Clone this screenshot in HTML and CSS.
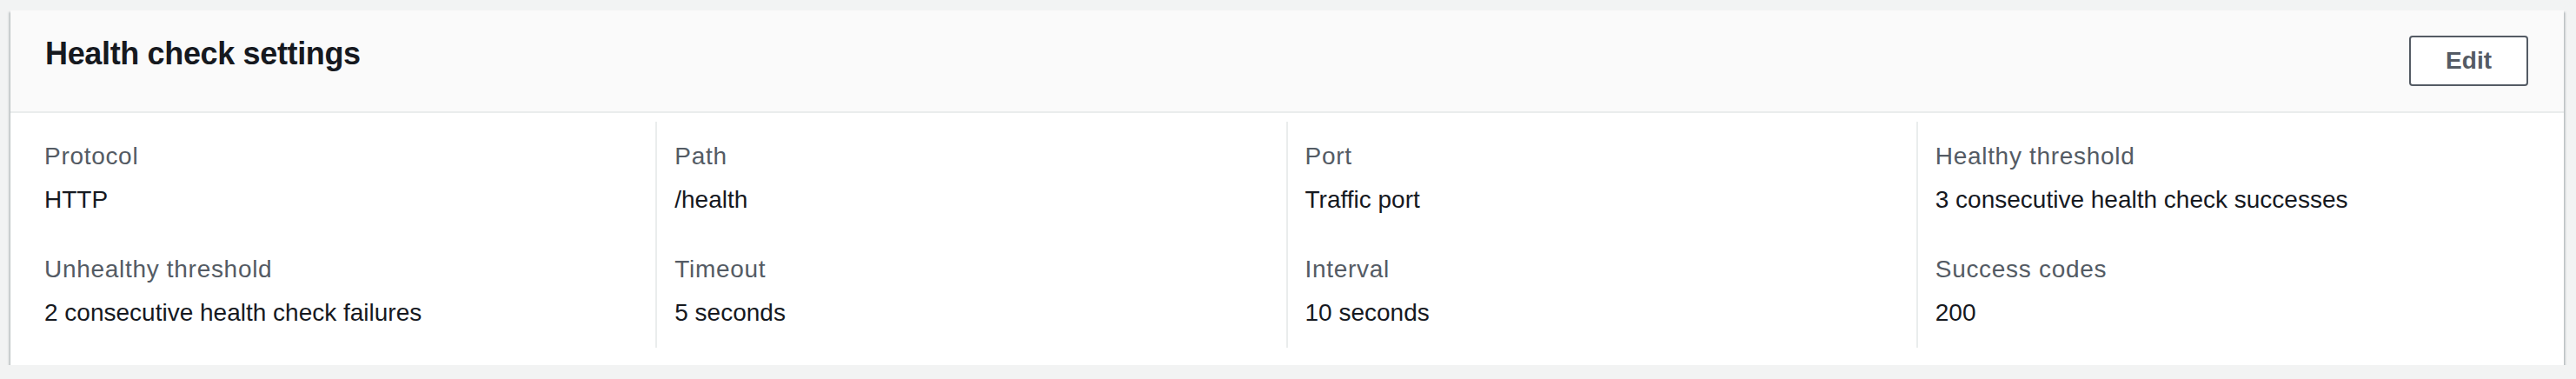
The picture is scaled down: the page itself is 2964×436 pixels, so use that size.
FILE: index.html
```html
<!DOCTYPE html>
<html lang="en">
<head>
<meta charset="utf-8">
<title>Health check settings</title>
<link rel="stylesheet" href="styles.css">
</head>
<body>
<section class="card">
  <header class="card-header">
    <h2 class="card-title">Health check settings</h2>
    <button class="btn" type="button">Edit</button>
  </header>
  <div class="card-body">
    <div class="grid">
      <div class="col">
        <div class="kv">
          <div class="kv-label">Protocol</div>
          <div class="kv-value">HTTP</div>
        </div>
        <div class="kv">
          <div class="kv-label">Unhealthy threshold</div>
          <div class="kv-value">2 consecutive health check failures</div>
        </div>
      </div>
      <div class="col">
        <div class="kv">
          <div class="kv-label">Path</div>
          <div class="kv-value">/health</div>
        </div>
        <div class="kv">
          <div class="kv-label">Timeout</div>
          <div class="kv-value">5 seconds</div>
        </div>
      </div>
      <div class="col">
        <div class="kv">
          <div class="kv-label">Port</div>
          <div class="kv-value">Traffic port</div>
        </div>
        <div class="kv">
          <div class="kv-label">Interval</div>
          <div class="kv-value">10 seconds</div>
        </div>
      </div>
      <div class="col">
        <div class="kv">
          <div class="kv-label">Healthy threshold</div>
          <div class="kv-value">3 consecutive health check successes</div>
        </div>
        <div class="kv">
          <div class="kv-label">Success codes</div>
          <div class="kv-value">200</div>
        </div>
      </div>
    </div>
  </div>
</section>
</body>
</html>
```
FILE: styles.css
```css
* {
  box-sizing: border-box;
}

html, body {
  margin: 0;
  background: #f2f3f3;
}

body {
  padding: 12px 14px 0 12px;
  font-family: "Liberation Sans", Arial, sans-serif;
  font-size: 28px;
  line-height: 44px;
  color: #16191f;
}

.card {
  background: #ffffff;
  box-shadow: 0 2px 2px 0 rgba(0, 28, 36, 0.3),
              2px 2px 2px 0 rgba(0, 28, 36, 0.15),
              -2px 2px 2px 0 rgba(0, 28, 36, 0.15);
}

.card-header {
  display: flex;
  justify-content: space-between;
  align-items: flex-start;
  background: #fafafa;
  border-bottom: 2px solid #eaeded;
  padding: 28px 41px 29px 40px;
}

.card-title {
  margin: 0;
  font-size: 36px;
  line-height: 44px;
  font-weight: 700;
  letter-spacing: -0.35px;
  color: #16191f;
}

.btn {
  margin-top: 1px;
  font-family: "Liberation Sans", Arial, sans-serif;
  font-size: 28px;
  line-height: 44px;
  font-weight: 700;
  color: #545b64;
  background: #ffffff;
  border: 2px solid #545b64;
  border-radius: 4px;
  padding: 5px 40px;
}

.card-body {
  padding: 10px 20px 20px 17px;
}

.grid {
  display: grid;
  grid-template-columns: repeat(4, 1fr);
}

.col {
  border-left: 2px solid #eaeded;
  padding: 18px 20px 18px 20px;
  display: flex;
  flex-direction: column;
  gap: 36px;
}

.col:first-child {
  border-left-color: transparent;
}

.kv-label {
  color: #545b64;
  letter-spacing: 0.7px;
  margin-bottom: 6px;
}

.kv-value {
  color: #16191f;
}
```
